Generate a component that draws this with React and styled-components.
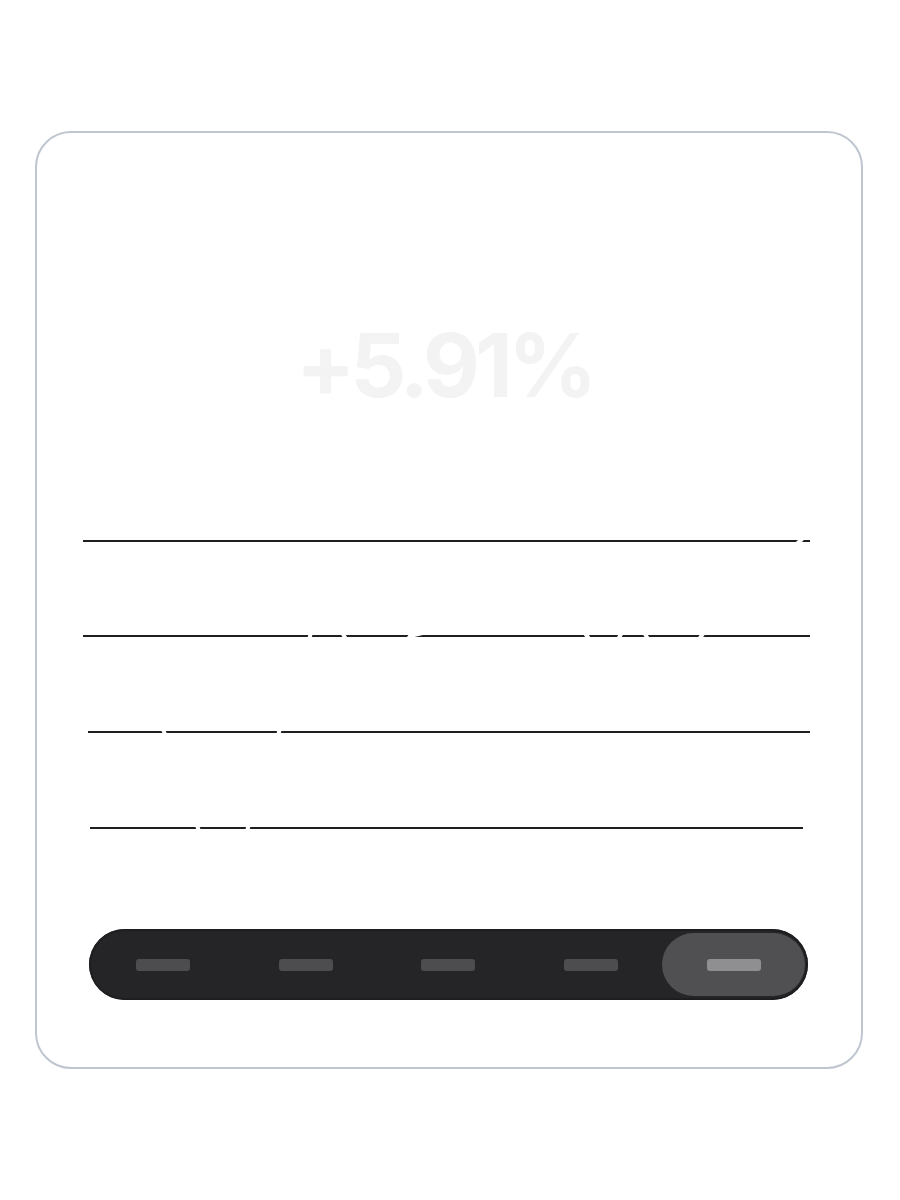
import React from 'react';
import styled, { createGlobalStyle } from 'styled-components';

const GlobalStyle = createGlobalStyle`
  html, body {
    margin: 0;
    padding: 0;
    background: #ffffff;
    font-family: Inter, "Noto Sans", sans-serif;
  }
`;

const Page = styled.div`
  padding: 131px 37px 0 35px;
`;

const Card = styled.div`
  box-sizing: border-box;
  width: 828px;
  height: 938px;
  border: 2px solid #bfc6d0;
  border-radius: 36px;
  background: #ffffff;
  display: flex;
  flex-direction: column;
  align-items: center;
`;

const Change = styled.div`
  margin-top: 188px;
  margin-right: 10px;
  font-size: 88px;
  line-height: 1;
  font-weight: 700;
  letter-spacing: -5px;
  color: #f3f3f3;
`;

const Chart = styled.svg`
  display: block;
  margin-top: 91px;
  align-self: flex-start;
  margin-left: 46px;
  width: 727px;
  height: 410px;
  overflow: visible;
`;

const TabBar = styled.div`
  box-sizing: border-box;
  margin-top: 19px;
  align-self: flex-start;
  margin-left: 52px;
  width: 719px;
  height: 71px;
  padding: 4px 3px;
  border-radius: 36px;
  background: #252527;
  box-shadow: inset 0 0 0 2px #1e1e20;
  display: grid;
  grid-template-columns: repeat(5, 1fr);
`;

const Tab = styled.div`
  display: flex;
  align-items: center;
  justify-content: center;
  border-radius: 32px;
  background: ${({ active }) => (active ? '#505053' : 'transparent')};
`;

const Label = styled.span`
  display: block;
  width: 54px;
  height: 12px;
  border-radius: 3px;
  background: ${({ active }) => (active ? '#8f8f91' : '#4d4d4f')};
`;

const gridRows = [
  { y: 541, from: 83, to: 810 },
  { y: 636, from: 83, to: 810 },
  { y: 732, from: 88, to: 810 },
  { y: 828, from: 90, to: 803 },
];

const trend = [
  [83, 680],
  [150, 692],
  [224, 902],
  [322, 599],
  [377, 691],
  [410, 636],
  [560, 600],
  [605, 660],
  [633, 615],
  [672, 677],
  [720, 610],
  [800, 541],
  [810, 531],
];

const tabs = ['1D', '1W', '1M', '1Y', 'ALL'];

export default function App() {
  return (
    <Page>
      <GlobalStyle />
      <Card>
        <Change>+5.91%</Change>
        <Chart viewBox="83 500 727 410">
          {gridRows.map((r) => (
            <line key={r.y} x1={r.from} x2={r.to} y1={r.y} y2={r.y} stroke="#1f1f1f" strokeWidth="2" />
          ))}
          <polyline
            points={trend.map((p) => p.join(',')).join(' ')}
            fill="none"
            stroke="#ffffff"
            strokeWidth="4"
            strokeLinejoin="round"
            strokeLinecap="round"
          />
        </Chart>
        <TabBar>
          {tabs.map((t, i) => (
            <Tab key={t} active={i === tabs.length - 1}>
              <Label active={i === tabs.length - 1} />
            </Tab>
          ))}
        </TabBar>
      </Card>
    </Page>
  );
}
